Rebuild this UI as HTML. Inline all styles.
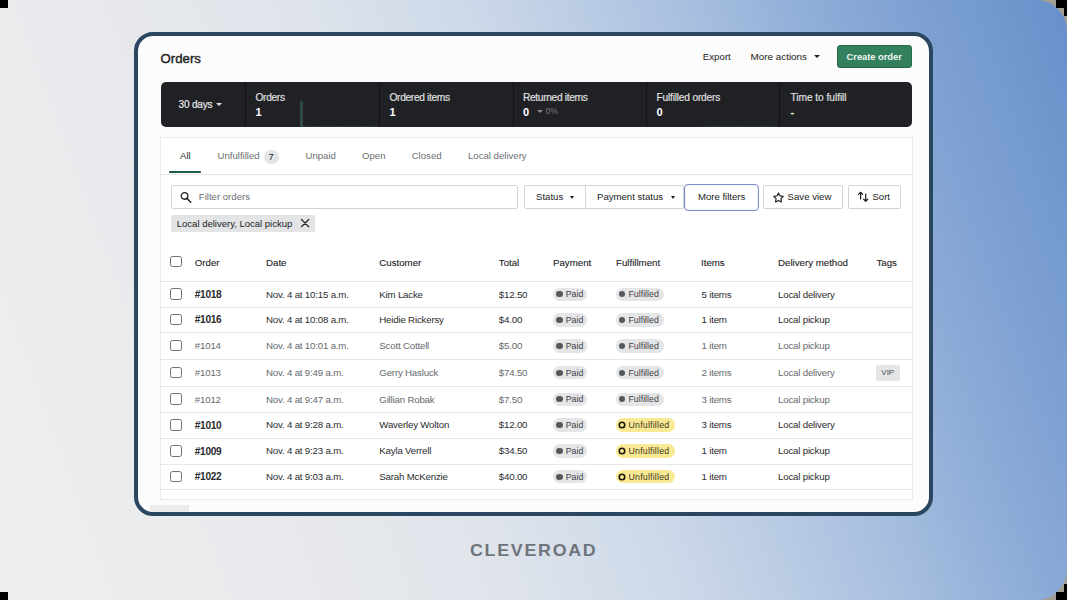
<!DOCTYPE html>
<html><head><meta charset="utf-8">
<style>
*{margin:0;padding:0;box-sizing:border-box}
html,body{width:1067px;height:600px;overflow:hidden}
body{font-family:"Liberation Sans",sans-serif;color:#202223;position:relative;
background:linear-gradient(70deg,#efefef 0%,#eaebed 17%,#e8e9ec 23%,#dfe4eb 40%,#cad6e8 55%,#a6bedf 71%,#8aa9d6 82%,#7097cd 95%,#678fca 100%);}
.a{position:absolute;white-space:nowrap}
#frame{position:absolute;left:134px;top:32px;width:799px;height:484px;border:4px solid #2b4661;border-radius:19px;background:#fcfcfc;overflow:hidden}
.t{position:absolute;white-space:nowrap;line-height:1}
.caret{position:absolute;width:0;height:0;border-left:3px solid transparent;border-right:3px solid transparent;border-top:3.5px solid #202223}
#bar{position:absolute;left:22.5px;top:46px;width:751px;height:45px;background:#202125;border-radius:5px}
.sep{position:absolute;top:0;width:1.5px;height:45px;background:#121215}
.lbl{position:absolute;color:#e3e3e3;-webkit-text-stroke:0.15px #e3e3e3;font-size:10.2px;letter-spacing:-0.33px;line-height:1;top:11px;white-space:nowrap}
.val{position:absolute;color:#fff;font-size:11px;font-weight:bold;line-height:1;top:24.5px}
#card{position:absolute;left:22.5px;top:101.5px;width:751.5px;height:361.2px;background:#fff;box-shadow:0 0 0 1px #ececec,0 1px 2px rgba(0,0,0,.06)}
.btn{position:absolute;border:1px solid #d2d4d6;background:#fff;border-radius:2px;height:23.4px;font-size:9.6px;line-height:21.6px;white-space:nowrap}
.hr{position:absolute;left:0;width:751.5px;height:1px;background:#e6e7e8}
.rbg{display:none}
.cb{position:absolute;width:12px;height:11.5px;border:1.3px solid #6d7175;border-radius:2.5px;left:9.5px}
.th{position:absolute;white-space:nowrap;line-height:10px;font-size:9.7px;color:#202223;-webkit-text-stroke:0.1px #202223}
.td{position:absolute;white-space:nowrap;line-height:10px;font-size:9.7px;letter-spacing:-0.19px;color:#2a2c2e}
.td.rd{color:#66696d}
.td.b{font-weight:bold;font-size:10.1px;letter-spacing:-0.3px;margin-top:0.2px}
.badge{position:absolute;height:13.4px;border-radius:6.7px;background:#e4e5e7;font-size:8.8px;line-height:13.4px;padding-top:0.6px;color:#3f4245;white-space:nowrap;padding-left:12.5px}
.badge i{position:absolute;left:3px;top:3.5px;width:6.4px;height:6.4px;border-radius:50%;background:#55585b}
.pd{width:34.2px}.fl{width:48.3px}
.uf{background:#f9e994;width:58.6px;color:#3f3a1e;letter-spacing:0.2px}
.ring{position:absolute;left:2.2px;top:2.8px}
.tag{position:absolute;height:16px;width:23.5px;background:#e4e5e7;border-radius:2px;font-size:8px;line-height:16px;text-align:center;color:#4d5053}
</style></head>
<body>
<div style="position:absolute;left:1027px;top:0;width:40px;height:40px;background:#a29d95"></div>
<div style="position:absolute;left:1027px;top:560px;width:40px;height:40px;background:#a29d95"></div>
<div id="bgr" style="position:absolute;left:0;top:0;width:1067px;height:600px;border-radius:0 31px 31px 0;background:linear-gradient(70deg,#efefef 0%,#eaebed 17%,#e8e9ec 23%,#dfe4eb 40%,#cad6e8 55%,#a6bedf 71%,#8aa9d6 82%,#7097cd 95%,#678fca 100%)"></div>
<div style="position:absolute;left:0;top:0;width:8px;height:8px;background:#000"></div>
<div style="position:absolute;left:0;top:592px;width:8px;height:8px;background:#000"></div>
<div style="position:absolute;left:1056px;top:0;width:11px;height:8px;background:#000"></div>
<div style="position:absolute;left:1064px;top:8px;width:3px;height:8px;background:#000"></div>
<div style="position:absolute;left:1056px;top:592px;width:11px;height:8px;background:#000"></div>
<div style="position:absolute;left:1064px;top:584px;width:3px;height:8px;background:#000"></div>
<div id="frame">
  <div class="t" style="left:22.6px;top:15.6px;font-size:13.2px;-webkit-text-stroke:0.4px #202223">Orders</div>
  <div class="t" style="left:564.8px;top:15.5px;font-size:9.7px">Export</div>
  <div class="t" style="left:612.5px;top:15.5px;font-size:9.9px">More actions</div>
  <div class="caret" style="left:675.8px;top:19px"></div>
  <div class="a" style="left:699px;top:9px;width:75px;height:23px;background:#33805f;border:1px solid #27684c;border-radius:3px;color:#eef8f2;font-size:9.3px;font-weight:bold;line-height:22.6px;text-align:center;padding-right:0.6px">Create order</div>

  <div id="bar"><div style="position:absolute;left:542px;top:44px;width:75px;height:1px;background:repeating-linear-gradient(90deg,#243a36 0 2px,transparent 2px 3px)"></div>
    <div class="t" style="left:18px;top:18px;color:#e8e8e8;font-size:10px;letter-spacing:-0.15px;-webkit-text-stroke:0.2px #e8e8e8">30 days</div>
    <div class="caret" style="left:55.6px;top:20.8px;border-top-color:#ddd;border-left-width:3.2px;border-right-width:3.2px;border-top-width:3.9px"></div>
    <div class="sep" style="left:84px"></div>
    <div class="lbl" style="left:95px">Orders</div><div class="val" style="left:95px">1</div>
    <div style="position:absolute;left:139.8px;top:19px;width:2.4px;height:26px;background:#2d4a43;border-radius:1.2px 1.2px 0 0"></div><div style="position:absolute;left:142px;top:44px;width:76px;height:1px;background:repeating-linear-gradient(90deg,#2a4540 0 2px,transparent 2px 3px)"></div>
    <div class="sep" style="left:218px"></div>
    <div class="lbl" style="left:229px">Ordered items</div><div class="val" style="left:229px">1</div>
    <div class="sep" style="left:352px"></div>
    <div class="lbl" style="left:362.5px">Returned items</div><div class="val" style="left:362.5px">0</div>
    <div class="caret" style="left:376px;top:28px;border-top-color:#8a8a8a"></div>
    <div class="t" style="left:385px;top:25px;color:#7d7d7d;font-size:8.5px">0%</div>
    <div class="sep" style="left:485px"></div>
    <div class="lbl" style="left:496px;letter-spacing:-0.2px">Fulfilled orders</div><div class="val" style="left:496px">0</div>
    <div class="sep" style="left:618px"></div>
    <div class="lbl" style="left:630px;letter-spacing:-0.05px">Time to fulfill</div><div class="val" style="left:630px">-</div>
  </div>
<div id="card">
  <div class="t" style="left:19.5px;top:13.9px;font-size:9.6px;color:#303133">All</div>
  <div style="position:absolute;left:8px;top:33.6px;width:32.5px;height:2px;background:#1d5c45;border-radius:1px 1px 0 0"></div>
  <div class="t" style="left:57px;top:13.7px;font-size:9.6px;color:#6b6f73">Unfulfilled</div>
  <div style="position:absolute;left:103.2px;top:12.3px;width:15px;height:14px;border-radius:7px;background:#e4e5e7;font-size:9.4px;line-height:14px;text-align:center">7</div>
  <div class="t" style="left:145px;top:13.7px;font-size:9.6px;color:#6b6f73">Unpaid</div>
  <div class="t" style="left:201.5px;top:13.7px;font-size:9.6px;color:#6b6f73">Open</div>
  <div class="t" style="left:251.2px;top:13.7px;font-size:9.6px;color:#6b6f73">Closed</div>
  <div class="t" style="left:307.5px;top:13.7px;font-size:9.6px;color:#6b6f73">Local delivery</div>
  <div class="hr" style="top:36.5px;background:#e1e3e5"></div>

  <div class="btn" style="left:10.2px;top:47.9px;width:347.3px;height:23.6px;line-height:22px;color:#6d7175"><svg style="position:absolute;left:8.2px;top:5.5px;overflow:visible" width="12" height="12" viewBox="0 0 12 12"><circle cx="4.55" cy="3.95" r="3.3" fill="none" stroke="#202223" stroke-width="1.3"/><path d="M6.9 6.3L10.8 10.2" stroke="#202223" stroke-width="1.4" stroke-linecap="round"/></svg><span style="position:absolute;left:27.1px">Filter orders</span></div>
  <div class="btn" style="left:363.5px;top:47.8px;width:160px;color:#202223"><span style="position:absolute;left:11px">Status</span><div class="caret" style="left:45.2px;top:9.6px;border-left-width:2.8px;border-right-width:2.8px;border-top-width:3.3px"></div><div style="position:absolute;left:60px;top:0;width:1px;height:21.4px;background:#d2d4d6"></div><span style="position:absolute;left:72px">Payment status</span><div class="caret" style="left:145.8px;top:9.6px;border-left-width:2.8px;border-right-width:2.8px;border-top-width:3.3px"></div></div>
  <div class="btn" style="left:523.4px;top:46px;width:75.5px;height:27px;border:1.8px solid #7d8ec9;border-radius:4px;line-height:23.6px;text-align:center;box-shadow:inset 0 0 0 0.6px #e3e8f6">More filters</div>
  <div class="btn" style="left:602.5px;top:47.8px;width:79.5px"><svg style="position:absolute;left:8.8px;top:5.6px" width="11" height="11" viewBox="0 0 11 11"><path d="M5.50 0.90L7.00 3.84L10.26 4.35L7.93 6.69L8.44 9.95L5.50 8.45L2.56 9.95L3.07 6.69L0.74 4.35L4.00 3.84Z" fill="none" stroke="#202223" stroke-width="1.15" stroke-linejoin="round"/></svg><span style="position:absolute;left:23.6px">Save view</span></div>
  <div class="btn" style="left:687.3px;top:47.8px;width:53.7px"><svg style="position:absolute;left:9px;top:5px" width="11" height="12" viewBox="0 0 11 12"><path d="M2.6 7.9V1.3M0.6 3.4L2.6 1.3L4.6 3.4M7.7 3V10.3M5.7 8.2L7.7 10.3L9.7 8.2" fill="none" stroke="#202223" stroke-width="1.25" stroke-linecap="round" stroke-linejoin="round"/></svg><span style="position:absolute;left:23.6px">Sort</span></div>

  <div style="position:absolute;left:10.8px;top:77px;width:143.3px;height:17.3px;background:#e3e4e6;border-radius:1.5px"><span class="t" style="left:5.5px;top:4px;font-size:9.5px">Local delivery, Local pickup</span><svg style="position:absolute;left:128.8px;top:3.5px" width="10" height="10" viewBox="0 0 10 10"><path d="M1.5 1.5l7.2 7.2M8.7 1.5l-7.2 7.2" stroke="#25272a" stroke-width="1.25" stroke-linecap="round"/></svg></div>
<div class="cb" style="top:118.3px"></div>
<div class="th" style="left:34.3px;top:120.2px">Order</div>
<div class="th" style="left:105.5px;top:120.2px">Date</div>
<div class="th" style="left:218.8px;top:120.2px">Customer</div>
<div class="th" style="left:338.3px;top:120.2px">Total</div>
<div class="th" style="left:392.5px;top:120.2px">Payment</div>
<div class="th" style="left:455.5px;top:120.2px">Fulfillment</div>
<div class="th" style="left:540.5px;top:120.2px">Items</div>
<div class="th" style="left:617.5px;top:120.2px">Delivery method</div>
<div class="th" style="left:716px;top:120.2px">Tags</div>
<div class="hr" style="top:143.4px"></div>
<div class="hr" style="top:169.0px"></div>
<div class="hr" style="top:194.6px"></div>
<div class="hr" style="top:221.0px"></div>
<div class="hr" style="top:248.3px"></div>
<div class="hr" style="top:274.0px"></div>
<div class="hr" style="top:300.0px"></div>
<div class="hr" style="top:326.0px"></div>
<div class="hr" style="top:351.4px"></div>
<div class="cb" style="top:150.7px"></div>
<div class="td b" style="left:34.3px;top:152.1px">#1018</div>
<div class="td" style="left:105.5px;top:152.1px">Nov. 4 at 10:15 a.m.</div>
<div class="td" style="left:218.8px;top:152.1px">Kim Lacke</div>
<div class="td" style="left:338.3px;top:152.1px">$12.50</div>
<div class="badge pd" style="left:392.7px;top:150.1px"><i></i>Paid</div>
<div class="badge fl" style="left:455.5px;top:150.1px"><i></i>Fulfilled</div>
<div class="td" style="left:541.0px;top:152.1px">5 items</div>
<div class="td" style="left:617.5px;top:152.1px">Local delivery</div>
<div class="cb" style="top:176.3px"></div>
<div class="td b" style="left:34.3px;top:177.70000000000002px">#1016</div>
<div class="td" style="left:105.5px;top:177.70000000000002px">Nov. 4 at 10:08 a.m.</div>
<div class="td" style="left:218.8px;top:177.70000000000002px">Heidie Rickersy</div>
<div class="td" style="left:338.3px;top:177.70000000000002px">$4.00</div>
<div class="badge pd" style="left:392.7px;top:175.70000000000002px"><i></i>Paid</div>
<div class="badge fl" style="left:455.5px;top:175.70000000000002px"><i></i>Fulfilled</div>
<div class="td" style="left:541.0px;top:177.70000000000002px">1 item</div>
<div class="td" style="left:617.5px;top:177.70000000000002px">Local pickup</div>
<div class="rbg" style="top:195.6px;height:25.400000000000006px"></div>
<div class="cb" style="top:202.3px"></div>
<div class="td rd" style="left:34.3px;top:203.70000000000002px">#1014</div>
<div class="td rd" style="left:105.5px;top:203.70000000000002px">Nov. 4 at 10:01 a.m.</div>
<div class="td rd" style="left:218.8px;top:203.70000000000002px">Scott Cottell</div>
<div class="td rd" style="left:338.3px;top:203.70000000000002px">$5.00</div>
<div class="badge pd" style="left:392.7px;top:201.70000000000002px"><i></i>Paid</div>
<div class="badge fl" style="left:455.5px;top:201.70000000000002px"><i></i>Fulfilled</div>
<div class="td rd" style="left:541.0px;top:203.70000000000002px">1 item</div>
<div class="td rd" style="left:617.5px;top:203.70000000000002px">Local pickup</div>
<div class="rbg" style="top:222.0px;height:26.30000000000001px"></div>
<div class="cb" style="top:229.15px"></div>
<div class="td rd" style="left:34.3px;top:230.55px">#1013</div>
<div class="td rd" style="left:105.5px;top:230.55px">Nov. 4 at 9:49 a.m.</div>
<div class="td rd" style="left:218.8px;top:230.55px">Gerry Hasluck</div>
<div class="td rd" style="left:338.3px;top:230.55px">$74.50</div>
<div class="badge pd" style="left:392.7px;top:228.55px"><i></i>Paid</div>
<div class="badge fl" style="left:455.5px;top:228.55px"><i></i>Fulfilled</div>
<div class="td rd" style="left:541.0px;top:230.55px">2 items</div>
<div class="td rd" style="left:617.5px;top:230.55px">Local delivery</div>
<div class="tag" style="left:715.5px;top:227.15px">VIP</div>
<div class="rbg" style="top:249.3px;height:24.69999999999999px"></div>
<div class="cb" style="top:255.64999999999998px"></div>
<div class="td rd" style="left:34.3px;top:257.04999999999995px">#1012</div>
<div class="td rd" style="left:105.5px;top:257.04999999999995px">Nov. 4 at 9:47 a.m.</div>
<div class="td rd" style="left:218.8px;top:257.04999999999995px">Gillian Robak</div>
<div class="td rd" style="left:338.3px;top:257.04999999999995px">$7.50</div>
<div class="badge pd" style="left:392.7px;top:255.04999999999998px"><i></i>Paid</div>
<div class="badge fl" style="left:455.5px;top:255.04999999999998px"><i></i>Fulfilled</div>
<div class="td rd" style="left:541.0px;top:257.04999999999995px">3 items</div>
<div class="td rd" style="left:617.5px;top:257.04999999999995px">Local pickup</div>
<div class="cb" style="top:281.5px"></div>
<div class="td b" style="left:34.3px;top:282.9px">#1010</div>
<div class="td" style="left:105.5px;top:282.9px">Nov. 4 at 9:28 a.m.</div>
<div class="td" style="left:218.8px;top:282.9px">Waverley Wolton</div>
<div class="td" style="left:338.3px;top:282.9px">$12.00</div>
<div class="badge pd" style="left:392.7px;top:280.9px"><i></i>Paid</div>
<div class="badge uf" style="left:455.5px;top:280.9px"><svg class="ring" width="8" height="8" viewBox="0 0 8 8"><circle cx="4" cy="4" r="2.75" fill="none" stroke="#1a1803" stroke-width="1.6"/></svg>Unfulfilled</div>
<div class="td" style="left:541.0px;top:282.9px">3 items</div>
<div class="td" style="left:617.5px;top:282.9px">Local delivery</div>
<div class="cb" style="top:307.5px"></div>
<div class="td b" style="left:34.3px;top:308.9px">#1009</div>
<div class="td" style="left:105.5px;top:308.9px">Nov. 4 at 9:23 a.m.</div>
<div class="td" style="left:218.8px;top:308.9px">Kayla Verrell</div>
<div class="td" style="left:338.3px;top:308.9px">$34.50</div>
<div class="badge pd" style="left:392.7px;top:306.9px"><i></i>Paid</div>
<div class="badge uf" style="left:455.5px;top:306.9px"><svg class="ring" width="8" height="8" viewBox="0 0 8 8"><circle cx="4" cy="4" r="2.75" fill="none" stroke="#1a1803" stroke-width="1.6"/></svg>Unfulfilled</div>
<div class="td" style="left:541.0px;top:308.9px">1 item</div>
<div class="td" style="left:617.5px;top:308.9px">Local pickup</div>
<div class="cb" style="top:333.2px"></div>
<div class="td b" style="left:34.3px;top:334.59999999999997px">#1022</div>
<div class="td" style="left:105.5px;top:334.59999999999997px">Nov. 4 at 9:03 a.m.</div>
<div class="td" style="left:218.8px;top:334.59999999999997px">Sarah McKenzie</div>
<div class="td" style="left:338.3px;top:334.59999999999997px">$40.00</div>
<div class="badge pd" style="left:392.7px;top:332.59999999999997px"><i></i>Paid</div>
<div class="badge uf" style="left:455.5px;top:332.59999999999997px"><svg class="ring" width="8" height="8" viewBox="0 0 8 8"><circle cx="4" cy="4" r="2.75" fill="none" stroke="#1a1803" stroke-width="1.6"/></svg>Unfulfilled</div>
<div class="td" style="left:541.0px;top:334.59999999999997px">1 item</div>
<div class="td" style="left:617.5px;top:334.59999999999997px">Local pickup</div>
</div>
  <div style="position:absolute;left:12px;top:468.5px;width:38.5px;height:8px;background:#ebebeb"></div>
</div>
<div class="a" style="left:470.3px;top:541.6px;font-size:16.5px;font-weight:bold;letter-spacing:1.6px;color:#6f747b;line-height:16.5px;transform:scaleX(1.08);transform-origin:0 0">CLEVEROAD</div>
</body></html>
